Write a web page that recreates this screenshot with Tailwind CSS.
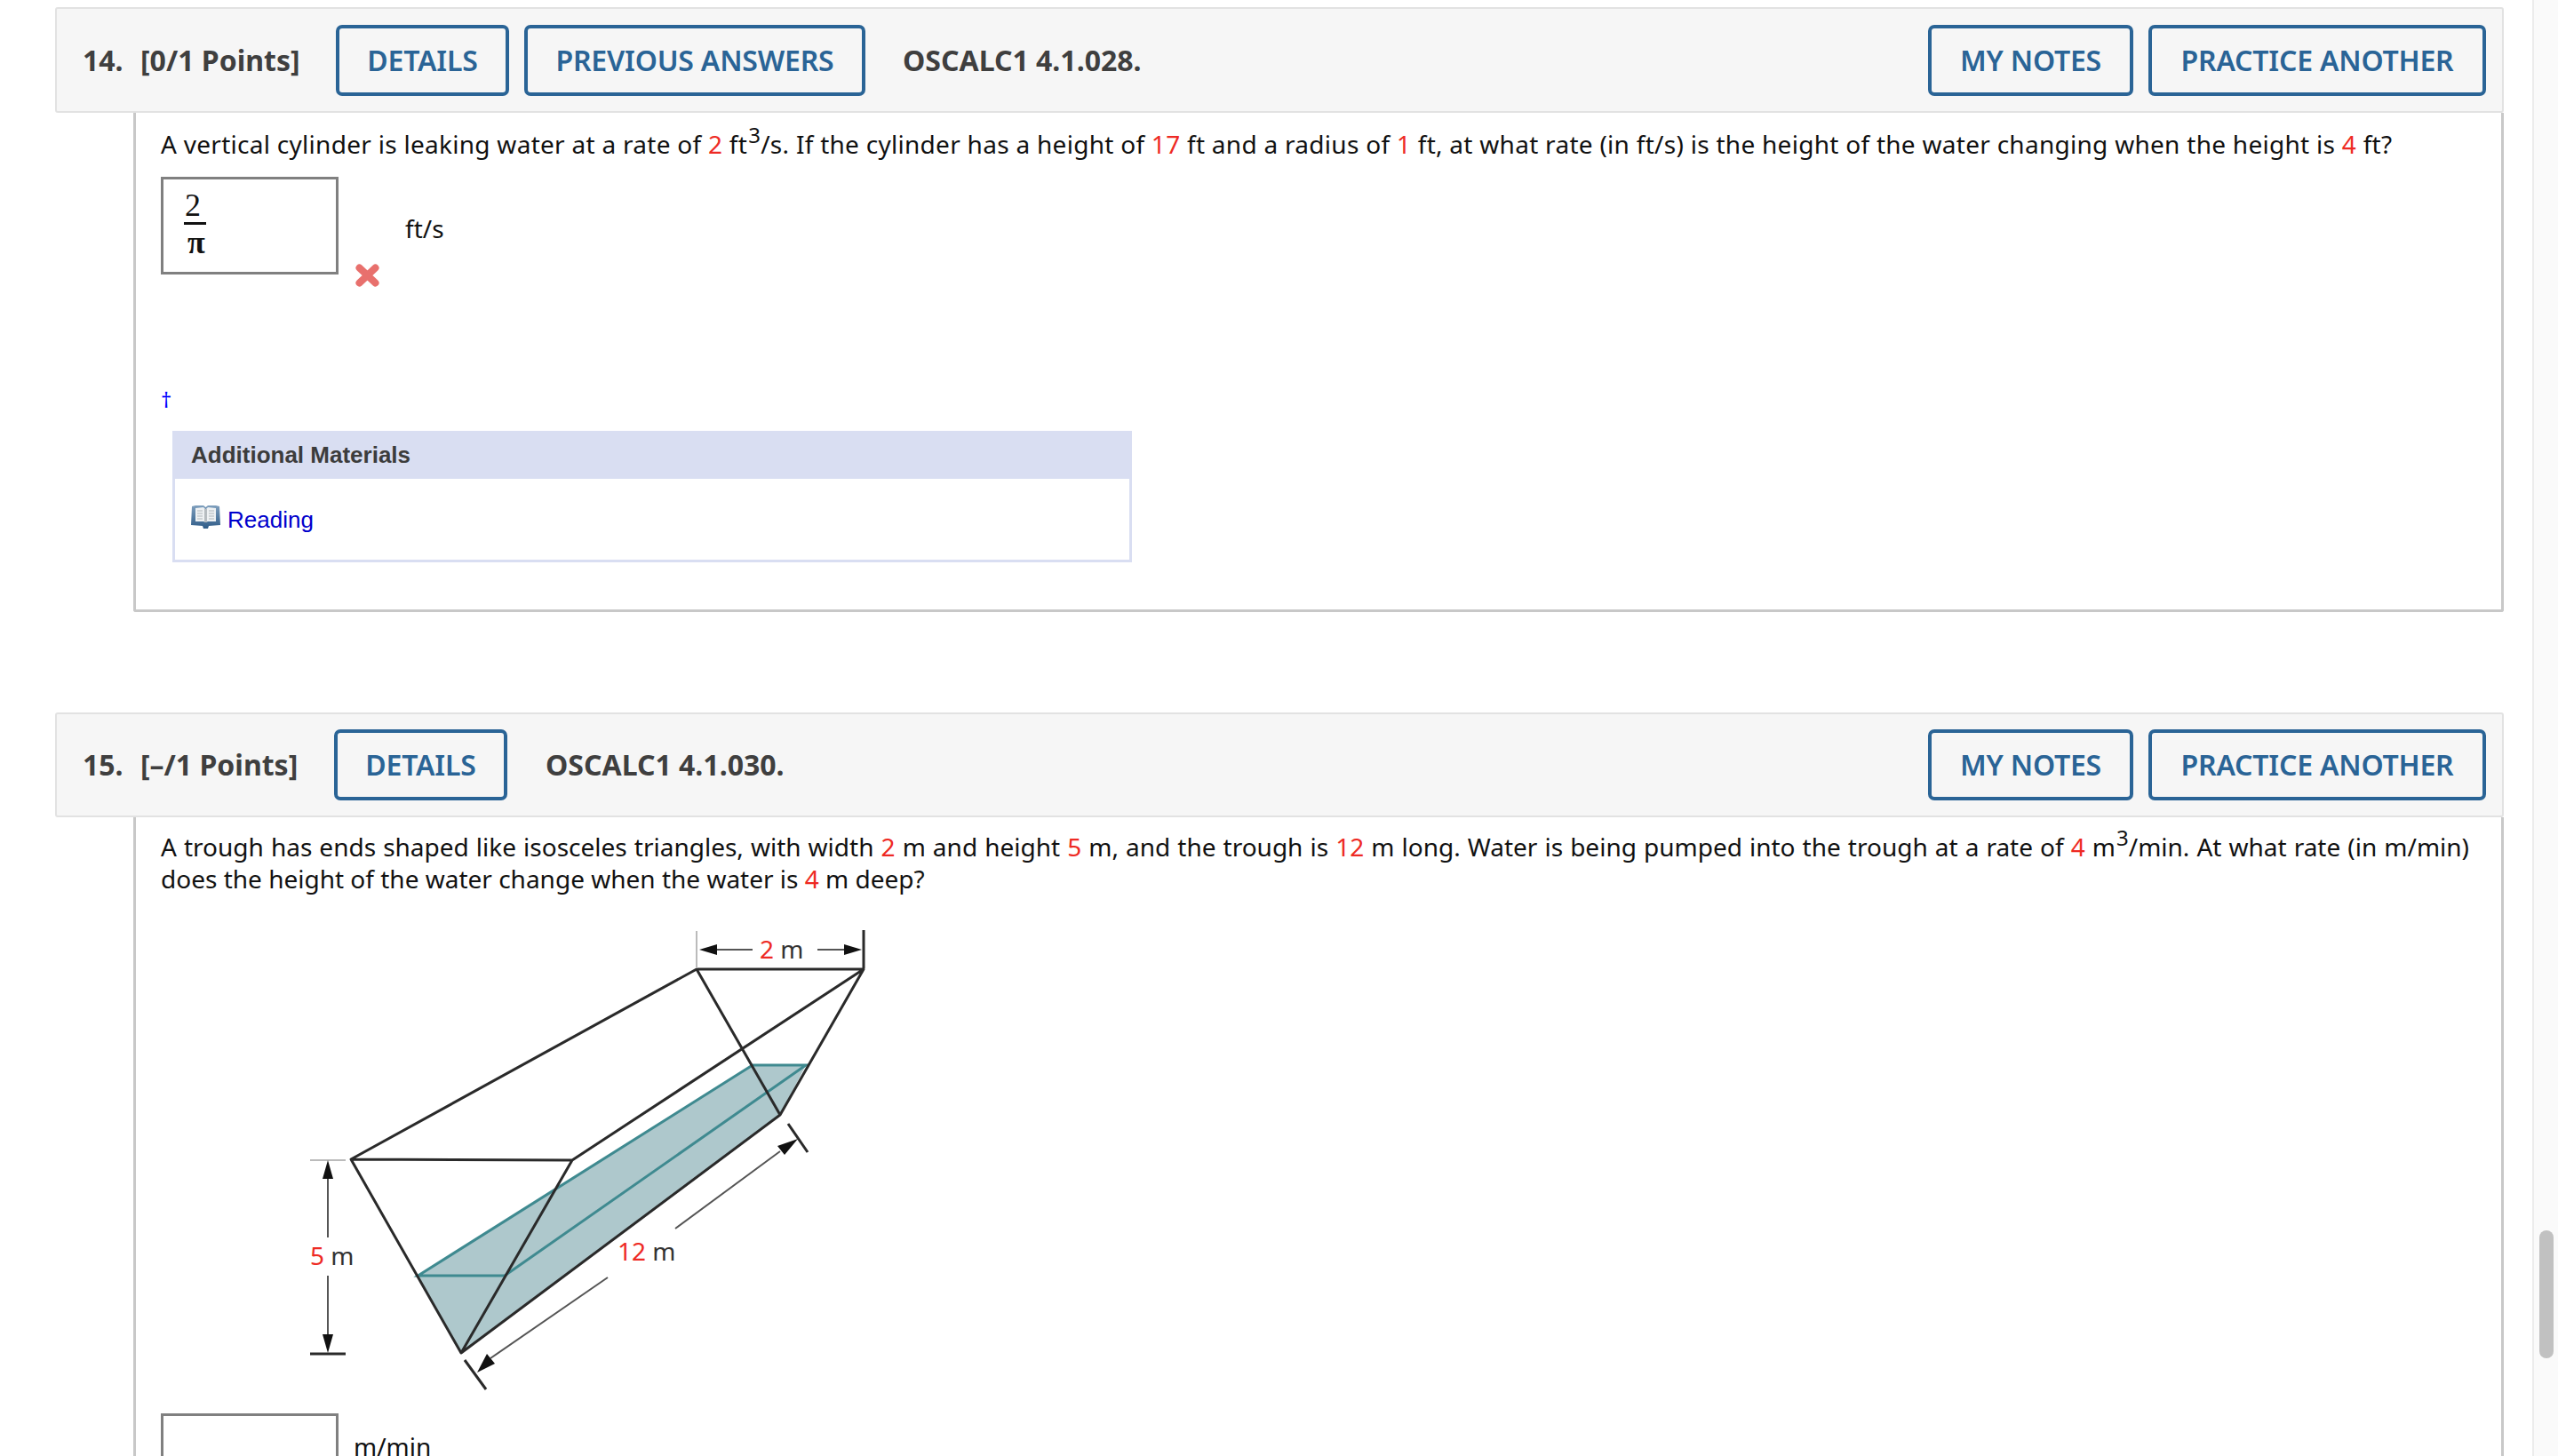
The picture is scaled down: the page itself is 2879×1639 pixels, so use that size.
<!DOCTYPE html>
<html lang="en">
<head>
  <meta charset="UTF-8">
  <title>WebAssign - Questions 14 and 15</title>
  <script src="https://cdn.jsdelivr.net/npm/@tailwindcss/browser@4"></script>
</head>
<body class="bg-white h-[1639px] overflow-hidden flex font-['Noto_Sans',sans-serif] text-[#111]">

  <main class="w-[2850px] shrink-0 pl-[62px] pr-[32px] pt-[8px]">

    <!-- Question 14 -->
    <section>
      <header class="h-[119px] border-2 border-[#e2e2e2] rounded-[3px] bg-[#f6f6f6] flex items-center justify-between pl-[29px] pr-[18px]">
        <div class="flex items-center text-[#3f3f3f] font-bold text-[32px]">
          <span class="w-[65px]">14.</span>
          <span class="w-[220px]">[0/1 Points]</span>
          <button class="h-[80px] w-[195px] border-4 border-[#2a6496] rounded-[7px] text-[#2a6496] font-semibold tracking-[-0.2px]">DETAILS</button>
          <button class="h-[80px] w-[384px] ml-[17px] border-4 border-[#2a6496] rounded-[7px] text-[#2a6496] font-semibold tracking-[-0.2px]">PREVIOUS ANSWERS</button>
          <span class="ml-[42px]">OSCALC1 4.1.028.</span>
        </div>
        <div class="flex gap-[17px] text-[32px] font-semibold tracking-[-0.2px] text-[#2a6496]">
          <button class="h-[80px] w-[231px] border-4 border-[#2a6496] rounded-[7px]">MY NOTES</button>
          <button class="h-[80px] w-[380px] border-4 border-[#2a6496] rounded-[7px]">PRACTICE ANOTHER</button>
        </div>
      </header>

      <div class="ml-[88px] h-[562px] border-l-[3px] border-r-[3px] border-b-[3px] border-[#c8c8c8] rounded-b-[3px] pl-[28px] pt-[17px] text-[28px]">
        <p class="leading-[36px] whitespace-nowrap tracking-[0.28px]">A vertical cylinder is leaking water at a rate of <span class="text-[#ee2a24]">2</span> ft<sup class="text-[24px] leading-none ml-[1px]">3</sup>/s. If the cylinder has a height of <span class="text-[#ee2a24]">17</span> ft and a radius of <span class="text-[#ee2a24]">1</span> ft, at what rate (in ft/s) is the height of the water changing when the height is <span class="text-[#ee2a24]">4</span> ft?</p>

        <div class="flex mt-[19px]">
          <div class="w-[200px] h-[110px] border-[3px] border-[#808080] pl-[23px] pt-[11px] font-['Liberation_Serif',serif] text-[36px] leading-none">
            <div class="w-[25px] pl-[1px] border-b-[3px] border-[#111] pb-[1px]">2</div>
            <div class="w-[25px] pl-[4px] pt-[2px] font-bold">π</div>
          </div>
          <svg class="mt-[98px] ml-[19px]" width="27" height="26" viewBox="0 0 27 26">
            <path d="M4.500 4.500 L22.500 21.500 M22.500 4.500 L4.500 21.500" stroke="#e8706d" stroke-width="8" stroke-linecap="round"/>
          </svg>
          <span class="ml-[29px] mt-[40px] h-[36px] leading-[36px]">ft/s</span>
        </div>

        <div class="mt-[113px] text-[#0000ff] text-[24px] leading-[28px]">†</div>

        <div class="mt-[21px] ml-[13px] w-[1080px] h-[148px] border-[3px] border-t-0 border-[#d9def2] font-['Liberation_Sans',sans-serif] text-[26px]">
          <div class="-mx-[3px] h-[54px] bg-[#d9def2] pl-[21px] flex items-center font-bold text-[#3c3c3c]">Additional Materials</div>
          <div class="pl-[18px] pt-[29px] flex items-start">
            <svg width="33" height="28" viewBox="0 0 33 28">
              <defs>
                <linearGradient id="cover" x1="0" y1="0" x2="0" y2="1">
                  <stop offset="0" stop-color="#7f9fbd"/>
                  <stop offset="1" stop-color="#2f5c88"/>
                </linearGradient>
              </defs>
              <path d="M1 2 L5 1 L14 1 L16.500 3 L19 1 L28 1 L32 2 L33 23 L20 24 L19 27 L14 27 L13 24 L0 23 Z" fill="url(#cover)"/>
              <path d="M5 4 L14 3 L16 5 L17 5 L19 3 L28 4 L28 19 L19 19 L16.500 20 L14 19 L5 19 Z" fill="#eef1f3"/>
              <path d="M7 7 H13 M7 10 H13 M7 13 H13 M7 16 H13 M20 7 H26 M20 10 H26 M20 13 H26 M20 16 H26" stroke="#c5cace" stroke-width="1.500"/>
              <rect x="15" y="5" width="3" height="15" fill="#b6bcc0"/>
            </svg>
            <a href="#" class="ml-[8px] mt-[2px] text-[#0000cc] leading-[30px]">Reading</a>
          </div>
        </div>
      </div>
    </section>

    <!-- Question 15 -->
    <section class="mt-[113px]">
      <header class="h-[118px] border-2 border-[#e2e2e2] rounded-[3px] bg-[#f6f6f6] flex items-center justify-between pl-[29px] pr-[18px]">
        <div class="flex items-center text-[#3f3f3f] font-bold text-[32px]">
          <span class="w-[65px]">15.</span>
          <span class="w-[218px]">[–/1 Points]</span>
          <button class="h-[80px] w-[195px] border-4 border-[#2a6496] rounded-[7px] text-[#2a6496] font-semibold tracking-[-0.2px]">DETAILS</button>
          <span class="ml-[43px]">OSCALC1 4.1.030.</span>
        </div>
        <div class="flex gap-[17px] text-[32px] font-semibold tracking-[-0.2px] text-[#2a6496]">
          <button class="h-[80px] w-[231px] border-4 border-[#2a6496] rounded-[7px]">MY NOTES</button>
          <button class="h-[80px] w-[380px] border-4 border-[#2a6496] rounded-[7px]">PRACTICE ANOTHER</button>
        </div>
      </header>

      <div class="ml-[88px] h-[800px] border-l-[3px] border-r-[3px] border-[#c8c8c8] pl-[28px] pt-[15px] text-[28px]">
        <p class="leading-[36px] w-[2598px] text-justify">A trough has ends shaped like isosceles triangles, with width <span class="text-[#ee2a24]">2</span> m and height <span class="text-[#ee2a24]">5</span> m, and the trough is <span class="text-[#ee2a24]">12</span> m long. Water is being pumped into the trough at a rate of <span class="text-[#ee2a24]">4</span> m<sup class="text-[24px] leading-none ml-[1px]">3</sup>/min. At what rate (in m/min) does the height of the water change when the water is <span class="text-[#ee2a24]">4</span> m deep?</p>

        <!-- trough figure, viewBox uses page coordinates -->
        <svg class="block -ml-[181px] mt-[33px]" width="1000" height="540" viewBox="0 1040 1000 540">
          <path d="M470.500 1436 L847 1199 L907 1199 L878 1255 L519 1523 Z" fill="#aec8cc"/>
          <path d="M470.500 1436 L847 1199 L907 1199 L568 1436 Z" fill="none" stroke="#3f8a90" stroke-width="3"/>
          <path d="M784 1091 L972 1091 L644 1306 L395 1305 Z M395 1305 L519 1523 L644 1306 M784 1091 L878 1255 L972 1091 M519 1523 L878 1255" fill="none" stroke="#2a2a2a" stroke-width="3" stroke-linejoin="round"/>
          <path d="M972 1047 V1090 M349 1524 H389 M887 1265 L909 1297 M523 1531 L547 1564" stroke="#2a2a2a" stroke-width="3"/>
          <path d="M784 1048 V1090 M349 1306 H389" stroke="#bbb" stroke-width="2"/>
          <path d="M807 1069 H847 M920 1069 H950 M369 1327 V1393 M369 1436 V1502 M878 1296 L760 1383 M684 1438 L552 1529" stroke="#555" stroke-width="2" fill="none"/>
          <path d="M787 1069 L807 1063 V1075 Z M970 1069 L950 1063 V1075 Z M369 1306 L363 1327 H375 Z M369 1523 L363 1502 H375 Z M898 1282 L875 1290 L883 1300 Z M537 1545 L548 1524 L557 1535 Z" fill="#111"/>
          <g font-size="28" fill="#333" font-family="Noto Sans">
            <text x="855" y="1079"><tspan fill="#ee2a24">2</tspan> m</text>
            <text x="349" y="1424"><tspan fill="#ee2a24">5</tspan> m</text>
            <text x="695" y="1419"><tspan fill="#ee2a24">12</tspan> m</text>
          </g>
        </svg>

        <div class="flex mt-[11px]">
          <div class="w-[200px] h-[110px] border-[3px] border-[#808080]"></div>
          <span class="ml-[17px] mt-[19px] h-[36px] leading-[36px]">m/min</span>
        </div>
      </div>
    </section>
  </main>

  <!-- page scrollbar -->
  <aside class="w-[29px] shrink-0 h-full bg-[#fafafa] border-l-2 border-[#ececec] pl-[6px]">
    <div class="w-[16px] h-[144px] mt-[1385px] bg-[#c1c1c1] rounded-full"></div>
  </aside>

</body>
</html>
